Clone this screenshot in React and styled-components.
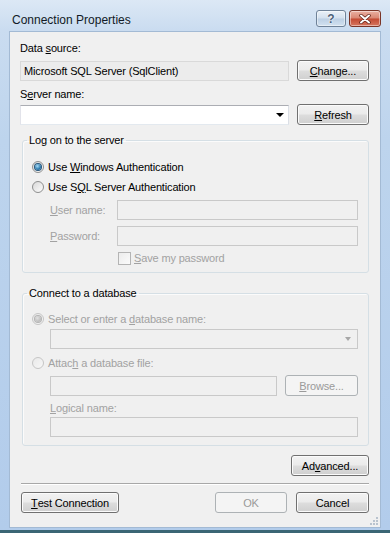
import styled, { createGlobalStyle } from "styled-components"

const GlobalStyle = createGlobalStyle`
    html, body {
        margin: 0;
        padding: 0;
    }
    body {
        background: #b9d1ea;
        font-family: "Liberation Sans", Arial, sans-serif;
    }
`

const Window = styled.div`
    width: 390px;
    height: 533px;
    box-sizing: border-box;
    display: flex;
    flex-direction: column;
    overflow: hidden;
    background: linear-gradient(180deg, #dce8f5 0px, #cadcf0 30px, #bdd4ed 140px, #b2cceb 100%);
    border-bottom: 3px solid #3b6675;
`

const TitleBar = styled.div`
    height: 31px;
    flex: none;
    display: flex;
    align-items: flex-start;
    padding: 0 9px 0 12px;
    box-sizing: border-box;
`

const Title = styled.div`
    padding-top: 12px;
    font-size: 12px;
    line-height: 16px;
    color: #111a26;
`

const CaptionButtons = styled.div`
    margin-left: auto;
    margin-top: 10px;
    display: flex;
    gap: 3px;
`

const CaptionButton = styled.div`
    width: ${p => (p.$close ? 32 : 30)}px;
    height: 17px;
    box-sizing: border-box;
    border-radius: 3px;
    display: flex;
    align-items: center;
    justify-content: center;
    border: 1px solid ${p => (p.$close ? "#7a3427" : "#6f8298")};
    background: ${p =>
        p.$close
            ? "linear-gradient(180deg, #eab0a2 0%, #d98672 48%, #c34a33 52%, #d6765f 100%)"
            : "linear-gradient(180deg, #eaf1f8 0%, #d3e0ee 48%, #bccfe4 52%, #d2e1f0 100%)"};
    box-shadow: inset 0 0 0 1px rgba(255, 255, 255, 0.45);
    font-size: 12px;
    font-weight: bold;
    color: #4c5f78;
    text-shadow: 0 0 2px #fff, 0 0 1px #fff;
`

const Body = styled.div`
    position: relative;
    flex: 1;
    margin: 0 9px 3px;
    padding: 9px 11px 14px 10px;
    background: #f0f0f0;
    border: 1px solid #a3bad4;
    display: flex;
    flex-direction: column;
    font-size: 11px;
    letter-spacing: -0.15px;
    color: #000;
`

const Label = styled.div`
    line-height: 15px;
    height: 15px;
    margin-top: ${p => p.$mt || 0}px;
    margin-left: ${p => p.$indent || 0}px;
    color: ${p => (p.$disabled ? "#a2a2a2" : "#000")};
    white-space: nowrap;
`

const Key = styled.span`
    text-decoration: underline;
    text-underline-offset: 1px;
`

const Row = styled.div`
    display: grid;
    grid-template-columns: 1fr ${p => p.$button || 72}px;
    column-gap: 8px;
    align-items: center;
    height: 21px;
    margin-top: ${p => p.$mt || 0}px;
    margin-left: ${p => p.$indent || 0}px;
`

const Field = styled.div`
    height: 20px;
    box-sizing: border-box;
    padding: 0 3px;
    display: flex;
    align-items: center;
    white-space: nowrap;
    margin-top: ${p => p.$mt || 0}px;
    margin-left: ${p => p.$indent || 0}px;
    ${p =>
        p.$variant === "readonly"
            ? "background: #ececec; border: 1px solid #d9d9d9;"
            : p.$variant === "disabled"
            ? "background: #f0f0f0; border: 1px solid #c9c9c9;"
            : "background: #fff; border: 1px solid #abadb3; border-left-color: #e2e3ea; border-right-color: #dbdfe6; border-bottom-color: #e3e9ef;"}
`

const Combo = styled(Field)`
    justify-content: flex-end;
    padding-right: ${p => (p.$variant === "disabled" ? 6 : 4)}px;
`

const Arrow = styled.span`
    width: 0;
    height: 0;
    border-left: ${p => (p.$disabled ? 3.5 : 4)}px solid transparent;
    border-right: ${p => (p.$disabled ? 3.5 : 4)}px solid transparent;
    border-top: 4px solid ${p => (p.$disabled ? "#a7a7a7" : "#000")};
`

const Button = styled.div`
    height: 21px;
    width: ${p => p.$width || 72}px;
    box-sizing: border-box;
    display: flex;
    align-items: center;
    justify-content: center;
    border-radius: 3px;
    margin-left: ${p => (p.$push ? "auto" : `${p.$ml || 0}px`)};
    border: 1px solid ${p => (p.$disabled ? "#adb2b5" : "#707070")};
    color: ${p => (p.$disabled ? "#9a9a9a" : "#000")};
    background: ${p =>
        p.$disabled
            ? "#f4f4f4"
            : "linear-gradient(180deg, #f2f2f2 0%, #ebebeb 48%, #dddddd 52%, #cfcfcf 100%)"};
    box-shadow: inset 0 0 0 1px ${p => (p.$disabled ? "#f4f4f4" : "#fbfbfb")};
    white-space: nowrap;
`

const Group = styled.fieldset`
    margin: ${p => p.$mt}px 0 0 2px;
    padding: 0;
    border: 1px solid #d5dfe5;
    border-radius: 3px;
    box-shadow: inset 1px 1px 0 #fbfbfb;
    min-inline-size: 0;
`

const Legend = styled.legend`
    margin-left: 4px;
    padding: 0 2px;
    line-height: 15px;
    height: 15px;
    color: #000;
`

const Stack = styled.div`
    display: flex;
    flex-direction: column;
    padding: ${p => p.$pt}px 10px ${p => p.$pb}px 9px;
`

const OptionRow = styled.div`
    display: flex;
    align-items: center;
    gap: ${p => p.$gap || 4}px;
    height: 16px;
    margin-top: ${p => p.$mt || 0}px;
    margin-left: ${p => p.$indent || 0}px;
    color: ${p => (p.$disabled ? "#a2a2a2" : "#000")};
    white-space: nowrap;
`

const Radio = styled.span`
    width: 12px;
    height: 12px;
    box-sizing: border-box;
    border-radius: 50%;
    display: flex;
    align-items: center;
    justify-content: center;
    border: 1px solid ${p => (p.$disabled ? "#c6c6c6" : "#8e8f8f")};
    background: ${p =>
        p.$disabled
            ? "linear-gradient(135deg, #e9e9e9, #f7f7f7)"
            : "linear-gradient(135deg, #d8d8d8, #fdfdfd)"};
    &::after {
        content: "";
        display: ${p => (p.$checked ? "block" : "none")};
        width: 6px;
        height: 6px;
        border-radius: 50%;
        background: ${p =>
            p.$disabled
                ? "radial-gradient(circle at 40% 35%, #e2e2e2, #a9a9a9)"
                : "radial-gradient(circle at 40% 35%, #a8dcf7, #2a79ad 60%, #1e4f78)"};
        box-shadow: 0 0 0 1px ${p => (p.$disabled ? "#b4b4b4" : "#27567c")};
    }
`

const Checkbox = styled.span`
    width: 13px;
    height: 13px;
    box-sizing: border-box;
    border: 1px solid #b4b4b4;
    background: linear-gradient(135deg, #ececec, #fbfbfb);
`

const FieldRow = styled.div`
    display: grid;
    grid-template-columns: 67px 1fr;
    align-items: center;
    height: 20px;
    margin-top: ${p => p.$mt}px;
    margin-left: 18px;
`

const ButtonBar = styled.div`
    display: flex;
    justify-content: ${p => p.$justify || "flex-end"};
    margin-top: ${p => p.$mt}px;
`

const Separator = styled.div`
    height: 1px;
    margin: 7px 0 0 1px;
    background: #a8a8a8;
    box-shadow: 0 1px 0 #fff;
`

const Grip = styled.svg`
    position: absolute;
    right: 1px;
    bottom: 1px;
`

const CloseGlyph = () => (
    <svg width="12" height="10" viewBox="0 0 12 10">
        <path d="M2 1.5 L10 8.5 M10 1.5 L2 8.5" stroke="#5a1d12" strokeWidth="3.4" strokeLinecap="round" />
        <path d="M2 1.5 L10 8.5 M10 1.5 L2 8.5" stroke="#fff" strokeWidth="2" strokeLinecap="round" />
    </svg>
)

export default function App() {
    return (
        <>
            <GlobalStyle />
            <Window>
                <TitleBar>
                    <Title>Connection Properties</Title>
                    <CaptionButtons>
                        <CaptionButton>?</CaptionButton>
                        <CaptionButton $close>
                            <CloseGlyph />
                        </CaptionButton>
                    </CaptionButtons>
                </TitleBar>
                <Body>
                    <Label>
                        Data <Key>s</Key>ource:
                    </Label>
                    <Row $mt={4}>
                        <Field $variant="readonly">Microsoft SQL Server (SqlClient)</Field>
                        <Button>
                            <Key>C</Key>hange...
                        </Button>
                    </Row>
                    <Label $mt={6}>
                        S<Key>e</Key>rver name:
                    </Label>
                    <Row $mt={2}>
                        <Combo>
                            <Arrow />
                        </Combo>
                        <Button>
                            <Key>R</Key>efresh
                        </Button>
                    </Row>

                    <Group $mt={8}>
                        <Legend>Log on to the server</Legend>
                        <Stack $pt={11} $pb={6}>
                            <OptionRow>
                                <Radio $checked />
                                <span>
                                    Use <Key>W</Key>indows Authentication
                                </span>
                            </OptionRow>
                            <OptionRow $mt={4}>
                                <Radio />
                                <span>
                                    Use S<Key>Q</Key>L Server Authentication
                                </span>
                            </OptionRow>
                            <FieldRow $mt={5}>
                                <Label $disabled>
                                    <Key>U</Key>ser name:
                                </Label>
                                <Field $variant="disabled" />
                            </FieldRow>
                            <FieldRow $mt={6}>
                                <Label $disabled>
                                    <Key>P</Key>assword:
                                </Label>
                                <Field $variant="disabled" />
                            </FieldRow>
                            <OptionRow $mt={4} $indent={86} $gap={3} $disabled>
                                <Checkbox />
                                <span>
                                    <Key>S</Key>ave my password
                                </span>
                            </OptionRow>
                        </Stack>
                    </Group>

                    <Group $mt={13}>
                        <Legend>Connect to a database</Legend>
                        <Stack $pt={10} $pb={8}>
                            <OptionRow $disabled>
                                <Radio $checked $disabled />
                                <span>
                                    Select or enter a <Key>d</Key>atabase name:
                                </span>
                            </OptionRow>
                            <Combo $variant="disabled" $mt={2} $indent={18}>
                                <Arrow $disabled />
                            </Combo>
                            <OptionRow $mt={6} $disabled>
                                <Radio $disabled />
                                <span>
                                    Attac<Key>h</Key> a database file:
                                </span>
                            </OptionRow>
                            <Row $mt={4} $indent={18} $button={73}>
                                <Field $variant="disabled" />
                                <Button $disabled $width={73}>
                                    <Key>B</Key>rowse...
                                </Button>
                            </Row>
                            <Label $mt={5} $indent={18} $disabled>
                                <Key>L</Key>ogical name:
                            </Label>
                            <Field $variant="disabled" $mt={1} $indent={18} />
                        </Stack>
                    </Group>

                    <ButtonBar $mt={9}>
                        <Button $width={78}>
                            Ad<Key>v</Key>anced...
                        </Button>
                    </ButtonBar>
                    <Separator />
                    <ButtonBar $mt={8} $justify="flex-start">
                        <Button $width={98} $ml={1}>
                            <Key>T</Key>est Connection
                        </Button>
                        <Button $disabled $push>
                            OK
                        </Button>
                        <Button $width={73} $ml={9}>
                            Cancel
                        </Button>
                    </ButtonBar>
                    <Grip width="10" height="10" viewBox="0 0 10 10">
                        {[
                            [7, 1],
                            [7, 4],
                            [4, 4],
                            [7, 7],
                            [4, 7],
                            [1, 7],
                        ].map(([x, y]) => (
                            <rect key={`${x}-${y}`} x={x} y={y} width="2" height="2" fill="#b9c3ce" />
                        ))}
                    </Grip>
                </Body>
            </Window>
        </>
    )
}
